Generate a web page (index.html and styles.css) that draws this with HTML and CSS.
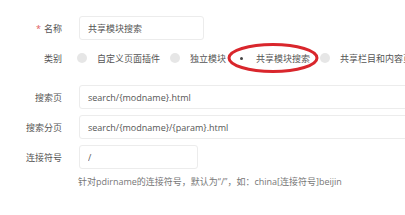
FILE: index.html
```html
<!DOCTYPE html>
<html lang="zh-CN">
<head>
    <meta charset="UTF-8">
    <title>共享模块搜索</title>
    <link rel="stylesheet" href="styles.css">
</head>
<body>
    <div class="form">
        <div class="row">
            <label class="lbl"><span class="req">*</span>名称</label>
            <input type="text" class="inp w-name" value="共享模块搜索">
        </div>
        <div class="row">
            <label class="lbl">类别</label>
            <div class="radios">
                <span class="radio"><i class="dot"></i>自定义页面插件</span>
                <span class="radio"><i class="dot"></i>独立模块</span>
                <span class="radio checked"><i class="dot"></i>共享模块搜索</span>
                <span class="radio"><i class="dot"></i>共享栏目和内容页模块</span>
                <svg class="mark" width="96" height="34" viewBox="0 0 96 34">
                    <ellipse cx="47" cy="17" rx="44" ry="13.5" fill="none" stroke="#d9262c" stroke-width="3"/>
                </svg>
            </div>
        </div>
        <div class="row gap-lg">
            <label class="lbl">搜索页</label>
            <input type="text" class="inp w-full" value="search/{modname}.html">
        </div>
        <div class="row">
            <label class="lbl">搜索分页</label>
            <input type="text" class="inp w-full" value="search/{modname}/{param}.html">
        </div>
        <div class="row">
            <label class="lbl">连接符号</label>
            <input type="text" class="inp w-sep" value="/">
        </div>
        <p class="help">针对pdirname的连接符号，默认为“/”，如：china[连接符号]beijin</p>
    </div>
</body>
</html>
```

FILE: styles.css
```css
body {
    margin: 0;
    background: #fff;
    font-family: "Open Sans", "Noto Sans CJK SC", sans-serif;
    font-size: 9px;
    color: #555;
    overflow: hidden;
}

.form {
    padding-top: 16px;
    width: 460px;
}

.row {
    display: flex;
    align-items: center;
    height: 24px;
    margin-bottom: 6px;
}

.row.gap-lg {
    margin-top: 15px;
}

.lbl {
    width: 62px;
    text-align: right;
    margin-right: 17px;
    color: #555;
    flex-shrink: 0;
}

.req {
    color: #e05a5a;
    margin-right: 3px;
}

.inp {
    height: 24px;
    box-sizing: border-box;
    border: 1px solid #ececec;
    border-radius: 3px;
    padding: 0 8px;
    font-family: inherit;
    font-size: 9px;
    color: #555;
    outline: none;
    background: #fff;
}

.w-name { width: 125px; }
.w-full { width: 360px; }
.w-sep { width: 119px; }

.radios {
    position: relative;
    align-self: stretch;
    display: flex;
    align-items: center;
    white-space: nowrap;
    margin-left: -2px;
}

.radio {
    display: flex;
    align-items: center;
    margin-right: 10px;
    color: #555;
}

.radio .dot {
    width: 10px;
    height: 10px;
    border-radius: 50%;
    background: #e6e6e6;
    margin-right: 10px;
    position: relative;
}

.radio.checked .dot {
    background: #fff;
}

.radio.checked .dot::after {
    content: "";
    position: absolute;
    left: 3.5px;
    top: 3.5px;
    width: 3px;
    height: 3px;
    border-radius: 50%;
    background: #444;
}

.mark {
    position: absolute;
    left: 149px;
    top: -5px;
}

.help {
    margin: 0;
    padding-left: 78px;
    color: #777;
    line-height: 14px;
}
```
